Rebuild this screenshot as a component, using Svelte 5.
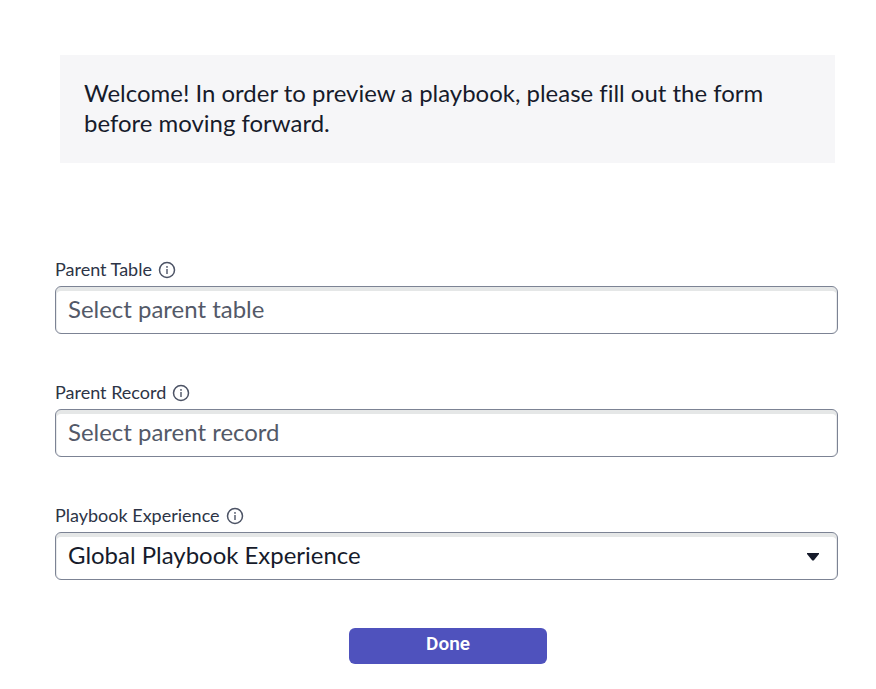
<script>
    let parentTable = '';
    let parentRecord = '';

    const experiences = ['Global Playbook Experience'];
    let experience = experiences[0];
</script>

{#snippet info()}
    <svg class="info" viewBox="0 0 18 18" width="18" height="18" aria-hidden="true">
        <circle cx="9" cy="9" r="7.5" fill="none" stroke="currentColor" stroke-width="1.5" />
        <circle cx="9" cy="5.9" r="0.9" fill="currentColor" />
        <path d="M9 8v5" stroke="currentColor" stroke-width="1.4" />
    </svg>
{/snippet}

<main class="preview">
    <p class="welcome">
        Welcome! In order to preview a playbook, please fill out the form before moving forward.
    </p>

    <form on:submit|preventDefault>
        <div class="field">
            <label for="parent-table"><span>Parent Table</span>{@render info()}</label>
            <input id="parent-table" class="control" placeholder="Select parent table" bind:value={parentTable} />
        </div>

        <div class="field">
            <label for="parent-record"><span>Parent Record</span>{@render info()}</label>
            <input id="parent-record" class="control" placeholder="Select parent record" bind:value={parentRecord} />
        </div>

        <div class="field">
            <label for="experience"><span>Playbook Experience</span>{@render info()}</label>
            <button type="button" id="experience" class="control select">
                <span>{experience}</span>
                <svg viewBox="0 0 12 8" width="12" height="8" aria-hidden="true">
                    <path d="M0 0h12v1L6.7 7.5H5.3L0 1z" fill="currentColor" />
                </svg>
            </button>
        </div>

        <button type="submit" class="done">Done</button>
    </form>
</main>

<style>
    :global(body) {
        margin: 0;
        background: #fff;
    }

    .preview {
        box-sizing: border-box;
        width: 876px;
        height: 689px;
        padding: 55px 38px 0 55px;
        font-family: Lato, sans-serif;
        color: #161b2b;
    }

    .welcome {
        box-sizing: border-box;
        height: 108px;
        margin: 0 3px 97px 5px;
        padding: 23px 24px 25px;
        background: #f6f6f8;
        font-size: 23.96px;
        line-height: 30px;
        font-variant-ligatures: none;
    }

    form {
        display: flex;
        flex-direction: column;
    }

    .field {
        margin-bottom: 49px;
    }

    label {
        display: flex;
        align-items: center;
        gap: 6px;
        height: 20px;
        margin-bottom: 6px;
        font-size: 18px;
        line-height: 20px;
        color: #2d3446;
    }

    label span {
        padding-bottom: 2px;
    }

    .info {
        display: block;
        color: #4c5365;
    }

    .control {
        display: block;
        box-sizing: border-box;
        width: 100%;
        height: 48px;
        margin: 0;
        padding: 0 12px 4px;
        border: 1px solid #7c8394;
        border-radius: 6px;
        background: #fff;
        box-shadow: inset 0 4px 0 #e5e7e7, inset 1px 0 0 #e9ebec, inset -1px 0 0 #e9ebec;
        font-family: inherit;
        font-size: 23.96px;
        color: #161b2b;
    }

    .control::placeholder {
        color: #535968;
        opacity: 1;
    }

    .select {
        display: flex;
        align-items: center;
        justify-content: space-between;
        padding-right: 18px;
        text-align: left;
    }

    .select svg {
        margin-top: 6px;
    }

    .done {
        align-self: center;
        width: 198px;
        height: 36px;
        margin: -1px 0 0 3px;
        padding: 0 0 5px;
        border: none;
        border-radius: 6px;
        background: #4f52bd;
        font-family: Roboto, sans-serif;
        font-size: 19px;
        font-weight: 600;
        color: #fff;
    }
</style>
